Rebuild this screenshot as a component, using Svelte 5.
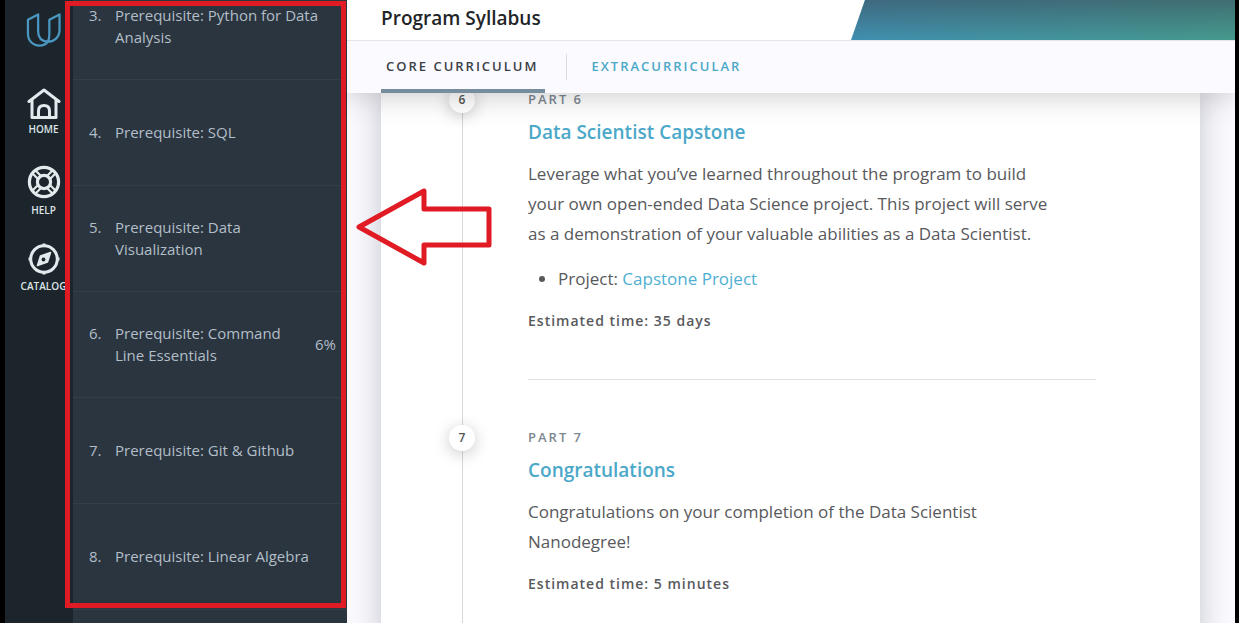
<script>
  const lessons = [
    { n: 3, title: 'Prerequisite: Python for Data Analysis', long: true },
    { n: 4, title: 'Prerequisite: SQL' },
    { n: 5, title: 'Prerequisite: Data Visualization', long: true },
    { n: 6, title: 'Prerequisite: Command Line Essentials', long: true, progress: '6%' },
    { n: 7, title: 'Prerequisite: Git & Github' },
    { n: 8, title: 'Prerequisite: Linear Algebra' }
  ];

  const parts = [
    {
      n: 6,
      title: 'Data Scientist Capstone',
      text: 'Leverage what you’ve learned throughout the program to build your own open-ended Data Science project. This project will serve as a demonstration of your valuable abilities as a Data Scientist.',
      project: 'Capstone Project',
      time: '35 days'
    },
    {
      n: 7,
      title: 'Congratulations',
      text: 'Congratulations on your completion of the Data Scientist Nanodegree!',
      time: '5 minutes'
    }
  ];
</script>

<div class="app">
  <nav class="rail">
    <a class="logo" href="#top" aria-label="Udacity">
      <svg width="35" height="35" viewBox="0 0 36 36" fill="none" stroke="#4a97c2" stroke-width="2.300" stroke-linejoin="round" stroke-linecap="round">
        <path d="M12.500 1.500 L2 7 V21 C2 28.500 7 33.500 14 33.500 C17.500 33.500 20.500 32 22.500 29.500 C16 29 12.500 25 12.500 19 Z" />
        <path d="M24 7 L34.500 1.500 V17.500 C34.500 24.500 29.500 29.500 22.500 29.500 C23.500 27.500 24 25 24 22 Z" />
      </svg>
    </a>
    <a class="item home" href="#home">
      <svg width="34" height="32" viewBox="0 0 34 32" fill="none" stroke="#e3eaee" stroke-width="3" stroke-linejoin="round" stroke-linecap="round">
        <path d="M2 13.500 L17 2 L32 13.500" />
        <path d="M5 12.500 V29.500 H29 V12.500" />
        <path d="M11.500 29 V23 C11.500 19.500 13.500 17.500 17 17.500 C20.500 17.500 22.500 19.500 22.500 23 V29" />
      </svg>
      <span>HOME</span>
    </a>
    <a class="item help" href="#help">
      <svg width="34" height="34" viewBox="0 0 34 34" fill="none" stroke="#e3eaee" stroke-width="3.200">
        <circle cx="17" cy="17" r="14.600" />
        <circle cx="17" cy="17" r="6.600" />
        <path d="M5.800 8.800 L11 14 M8.800 5.800 L14 11 M28.200 8.800 L23 14 M25.200 5.800 L20 11 M5.800 25.200 L11 20 M8.800 28.200 L14 23 M28.200 25.200 L23 20 M25.200 28.200 L20 23" stroke-width="2.200" />
      </svg>
      <span>HELP</span>
    </a>
    <a class="item" href="#catalog">
      <svg width="34" height="32" viewBox="0 0 34 32" fill="none" stroke="#e3eaee" stroke-linejoin="round">
        <circle cx="17" cy="16" r="13.300" stroke-width="3" />
        <path d="M17 .500 V3 M17 29 V31.500 M1.500 16 H4 M30 16 H32.500" stroke-width="3" />
        <path d="M23.500 9.500 L20.500 19 L10.500 22.500 L13.500 13 Z" fill="#e3eaee" stroke-width="1.600" />
        <circle cx="16.500" cy="16.500" r="1.900" fill="#1c252b" stroke="none" />
      </svg>
      <span>CATALOG</span>
    </a>
  </nav>

  <aside class="sidebar">
    <ul>
      {#each lessons as l}
        <li class:long={l.long}>
          <span class="num">{l.n}.</span>
          <a href={'#lesson-' + l.n}>{l.title}</a>
          {#if l.progress}<span class="progress">{l.progress}</span>{/if}
        </li>
      {/each}
    </ul>
  </aside>

  <main>
    <header>
      <h1>Program Syllabus</h1>
      <div class="banner"></div>
    </header>
    <div class="tabs" role="tablist">
      <button class="active" role="tab" aria-selected="true">CORE CURRICULUM</button>
      <span class="sep"></span>
      <button role="tab" aria-selected="false">EXTRACURRICULAR</button>
    </div>
    <div class="scroll">
      <div class="card">
        {#each parts as p}
          <section>
            <div class="track"><span class="dot">{p.n}</span></div>
            <div class="body">
              <div class="label">PART {p.n}</div>
              <h2><a href={'#part-' + p.n}>{p.title}</a></h2>
              <p>{p.text}</p>
              {#if p.project}
                <ul><li>Project: <a href="#project">{p.project}</a></li></ul>
              {/if}
              <div class="time">Estimated time: {p.time}</div>
            </div>
          </section>
        {/each}
      </div>
    </div>
  </main>

  <div class="frame"></div>
  <svg class="arrow" width="138" height="80" viewBox="0 0 138 80" fill="none" stroke="#e01b24" stroke-width="5" stroke-linejoin="round">
    <path d="M4 39 L69 3 V21 H134 V57 H69 V75 Z" />
  </svg>
</div>

<style>
  :global(body) {
    margin: 0;
    background: #000;
  }
  .app {
    position: relative;
    box-sizing: border-box;
    display: flex;
    height: 100vh;
    overflow: hidden;
    border-left: 5px solid #000;
    border-right: 4px solid #000;
    font-family: 'Open Sans', 'Noto Sans', sans-serif;
  }
  a {
    color: inherit;
    text-decoration: none;
  }
  ul, h1, h2, p {
    margin: 0;
    padding: 0;
  }

  .rail {
    flex: 0 0 68px;
    box-sizing: border-box;
    padding: 13px 0 0 9px;
    display: flex;
    flex-direction: column;
    align-items: center;
    background: #1c252b;
  }
  .rail svg {
    display: block;
  }
  .logo {
    margin-bottom: 40px;
  }
  .item {
    display: flex;
    flex-direction: column;
    align-items: center;
    gap: 4px;
    margin-bottom: 28px;
    color: #dde4e8;
    font-size: 10px;
    line-height: 14px;
    font-weight: 600;
  }
  .home {
    gap: 2px;
    margin-bottom: 29px;
  }
  .help {
    margin-bottom: 26px;
  }

  .sidebar {
    flex: 0 0 274px;
    overflow: hidden;
    background: #2a3540;
  }
  .sidebar ul {
    list-style: none;
    margin-top: -26px;
  }
  .sidebar li {
    box-sizing: border-box;
    display: flex;
    align-items: center;
    min-height: 106px;
    padding: 0 11px 2px 16px;
    border-bottom: 1px solid #333f48;
    color: #b3bec7;
    font-size: 15px;
    line-height: 22px;
  }
  .num {
    flex: 0 0 26px;
  }
  .long .num {
    padding-bottom: 22px;
  }
  .sidebar li a {
    flex: 1;
    max-width: 208px;
  }
  .sidebar .long:has(.progress) a {
    max-width: 180px;
  }
  .progress {
    margin-left: auto;
  }

  main {
    flex: 1;
    min-width: 0;
    overflow: hidden;
    display: flex;
    flex-direction: column;
    background: #f9f9fe;
  }
  header {
    position: relative;
    z-index: 2;
    display: flex;
    justify-content: space-between;
    height: 40px;
    background: #fff;
    border-bottom: 1px solid #e4e5ea;
  }
  h1 {
    padding-left: 34px;
    color: #222427;
    font-size: 19px;
    line-height: 36px;
    font-weight: 600;
  }
  .banner {
    width: 384px;
    background: linear-gradient(to bottom, rgba(60, 80, 95, 0.6), rgba(60, 80, 95, 0)), linear-gradient(to right, #408fb0, #459a8d);
    clip-path: polygon(14px 0, 100% 0, 100% 100%, 0 100%);
  }
  .tabs {
    position: relative;
    z-index: 1;
    display: flex;
    align-items: center;
    height: 52px;
    padding-left: 34px;
    background: #fafaff;
    box-shadow: 0 2px 30px rgba(0, 0, 0, 0.22);
  }
  .tabs button {
    height: 100%;
    box-sizing: border-box;
    margin: 0;
    padding: 1px 5px 0;
    border: 0;
    border-bottom: 4px solid transparent;
    background: none;
    color: #4ba8c6;
    font-family: inherit;
    font-size: 13px;
    font-weight: 600;
    letter-spacing: 2px;
  }
  .tabs .active {
    padding-right: 7px;
    color: #3b4046;
    border-color: #768d9e;
  }
  .sep {
    width: 1px;
    height: 26px;
    margin: 0 19px 0 21px;
    background: #dcdde4;
  }
  .scroll {
    flex: 1;
    min-height: 0;
    overflow: hidden;
    padding: 0 35px 0 34px;
  }
  .card {
    min-height: 100%;
    background: #fff;
    box-shadow: 0 0 28px rgba(30, 30, 50, 0.24);
  }
  section {
    display: flex;
  }
  .card section:first-child {
    margin-top: -4px;
  }
  .track {
    flex: 0 0 147px;
    box-sizing: border-box;
    padding: 0 0 0 68px;
    background: linear-gradient(#d8d9dc, #d8d9dc) 81px 0 / 1px 100% no-repeat;
  }
  .dot {
    display: block;
    width: 26px;
    height: 26px;
    margin-top: -2px;
    border-radius: 50%;
    background: #fff;
    box-shadow: 0 3px 16px rgba(0, 0, 0, 0.22);
    color: #555;
    font-size: 12px;
    line-height: 26px;
    font-weight: 600;
    text-align: center;
  }
  .body {
    flex: 1;
    margin-right: 104px;
    padding-bottom: 48px;
    color: #58595c;
  }
  section:not(:last-child) .body {
    border-bottom: 1px solid #dfe0e3;
    margin-bottom: 47px;
  }
  .label {
    color: #7d8891;
    font-size: 13px;
    line-height: 20px;
    font-weight: 600;
    letter-spacing: 2px;
  }
  h2 {
    margin-top: 8px;
    color: #4ba8c9;
    font-size: 19px;
    line-height: 30px;
    font-weight: 600;
  }
  p {
    max-width: 530px;
    margin-top: 12px;
    font-size: 17px;
    line-height: 30px;
  }
  .body ul {
    margin-top: 15px;
    padding-left: 30px;
    font-size: 17px;
    line-height: 30px;
  }
  .body li a {
    color: #4fb0d3;
  }
  .time {
    margin-top: 17px;
    font-size: 14px;
    line-height: 20px;
    font-weight: 600;
    letter-spacing: 1px;
  }

  .frame {
    position: absolute;
    z-index: 3;
    left: 60px;
    top: 1px;
    width: 281px;
    height: 607px;
    box-sizing: border-box;
    border: 5px solid #e01b24;
    pointer-events: none;
  }
  .arrow {
    position: absolute;
    z-index: 3;
    left: 350px;
    top: 188px;
    pointer-events: none;
  }
</style>
